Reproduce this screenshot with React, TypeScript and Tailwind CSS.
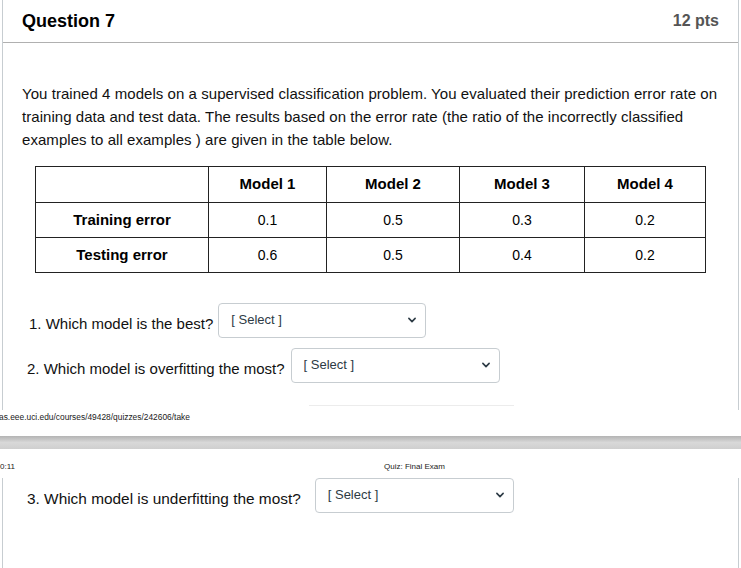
import React from 'react';

const models = ['Model 1', 'Model 2', 'Model 3', 'Model 4'];
const rows = [
  { label: 'Training error', values: ['0.1', '0.5', '0.3', '0.2'] },
  { label: 'Testing error', values: ['0.6', '0.5', '0.4', '0.2'] },
];
const colWidths = ['w-[173px]', 'w-[118px]', 'w-[133px]', 'w-[125px]', 'w-[121px]'];

const Chevron = () => (
  <svg width="10" height="10" viewBox="0 0 16 16" className="text-[#2d3b45]">
    <path d="M3 5.5l5 5 5-5" fill="none" stroke="currentColor" strokeWidth="2.6" strokeLinecap="round" strokeLinejoin="round" />
  </svg>
);

const SelectBox = ({ width }: { width: string }) => (
  <div className={`${width} h-[35px] border border-[#c7cdd1] rounded-[4px] bg-white flex items-start justify-between pl-[12px] pr-[8px] pt-[8px]`}>
    <span className="text-[13px] leading-[16px] text-[#2d3b45]">[ Select ]</span>
    <span className="pt-[3px]"><Chevron /></span>
  </div>
);

const Question = ({ text, select, className, textClass }: { text: string; select: string; className: string; textClass: string }) => (
  <div className={`flex items-start ${className}`}>
    <span className={`leading-[20px] text-[#111] pt-[11px] ${textClass}`}>{text}</span>
    <SelectBox width={select} />
  </div>
);

export default function App() {
  return (
    <div className="w-[741px] h-[568px] overflow-hidden bg-white" style={{ fontFamily: '"Liberation Sans", Arial, sans-serif' }}>
      {/* Page 1 */}
      <div className="mx-[2px] h-[410px] border-x border-[#c7cdd1]">
        <div className="h-[43px] border-b border-[#b0b0b0] flex items-center justify-between pl-[19px] pr-[19px]">
          <span className="text-[18px] font-bold text-black">Question 7</span>
          <span className="text-[16px] font-bold text-[#555]">12 pts</span>
        </div>
        <div className="pl-[19px] pr-[14px] pt-[39px]">
          <p className="text-[15px] leading-[23px] text-[#111] tracking-[0.05px]">
            You trained 4 models on a supervised classification problem. You evaluated their prediction error rate on training data and test data. The results based on the error rate (the ratio of the incorrectly classified examples to all examples ) are given in the table below.
          </p>
          <table className="mt-[15px] ml-[13px] border-collapse text-[15px] text-black">
            <thead>
              <tr className="h-[36px]">
                <th className={`${colWidths[0]} border border-[#222]`}></th>
                {models.map((m, i) => (
                  <th key={m} className={`${colWidths[i + 1]} border border-[#222] font-bold`}>{m}</th>
                ))}
              </tr>
            </thead>
            <tbody>
              {rows.map((r) => (
                <tr key={r.label} className="h-[35px]">
                  <td className="border border-[#222] font-bold text-center">{r.label}</td>
                  {r.values.map((v, i) => (
                    <td key={i} className="border border-[#222] text-center text-[14px]">{v}</td>
                  ))}
                </tr>
              ))}
            </tbody>
          </table>
          <Question text="1. Which model is the best?" select="w-[208px]" className="mt-[30px] ml-[7px]" textClass="text-[15px] mr-[5px]" />
          <Question text="2. Which model is overfitting the most?" select="w-[209px]" className="mt-[10px] ml-[5px]" textClass="text-[15px] mr-[6px]" />
          <div className="mt-[22px] ml-[287px] w-[205px] border-t border-[#ececec]"></div>
        </div>
      </div>

      {/* Print page break */}
      <div className="text-[8.4px] leading-[10px] text-[#222] pt-[2px] -ml-[1px]">as.eee.uci.edu/courses/49428/quizzes/242606/take</div>
      <div className="mt-[14px] h-[13px] bg-gradient-to-b from-[#b4b4b4] via-[#d8d8d8] to-[#cfcfcf]"></div>
      <div className="relative h-[29px] text-[8px] text-[#222]">
        <span className="absolute left-0 top-[12px]">0:11</span>
        <span className="absolute left-[384px] top-[12px]">Quiz: Final Exam</span>
      </div>

      {/* Page 2 */}
      <div className="mx-[2px] h-[200px] border-x border-[#c7cdd1]">
        <Question text="3.  Which model is underfitting the most?" select="w-[199px]" className="ml-[24px]" textClass="text-[15.4px] mr-[14px]" />
      </div>
    </div>
  );
}
